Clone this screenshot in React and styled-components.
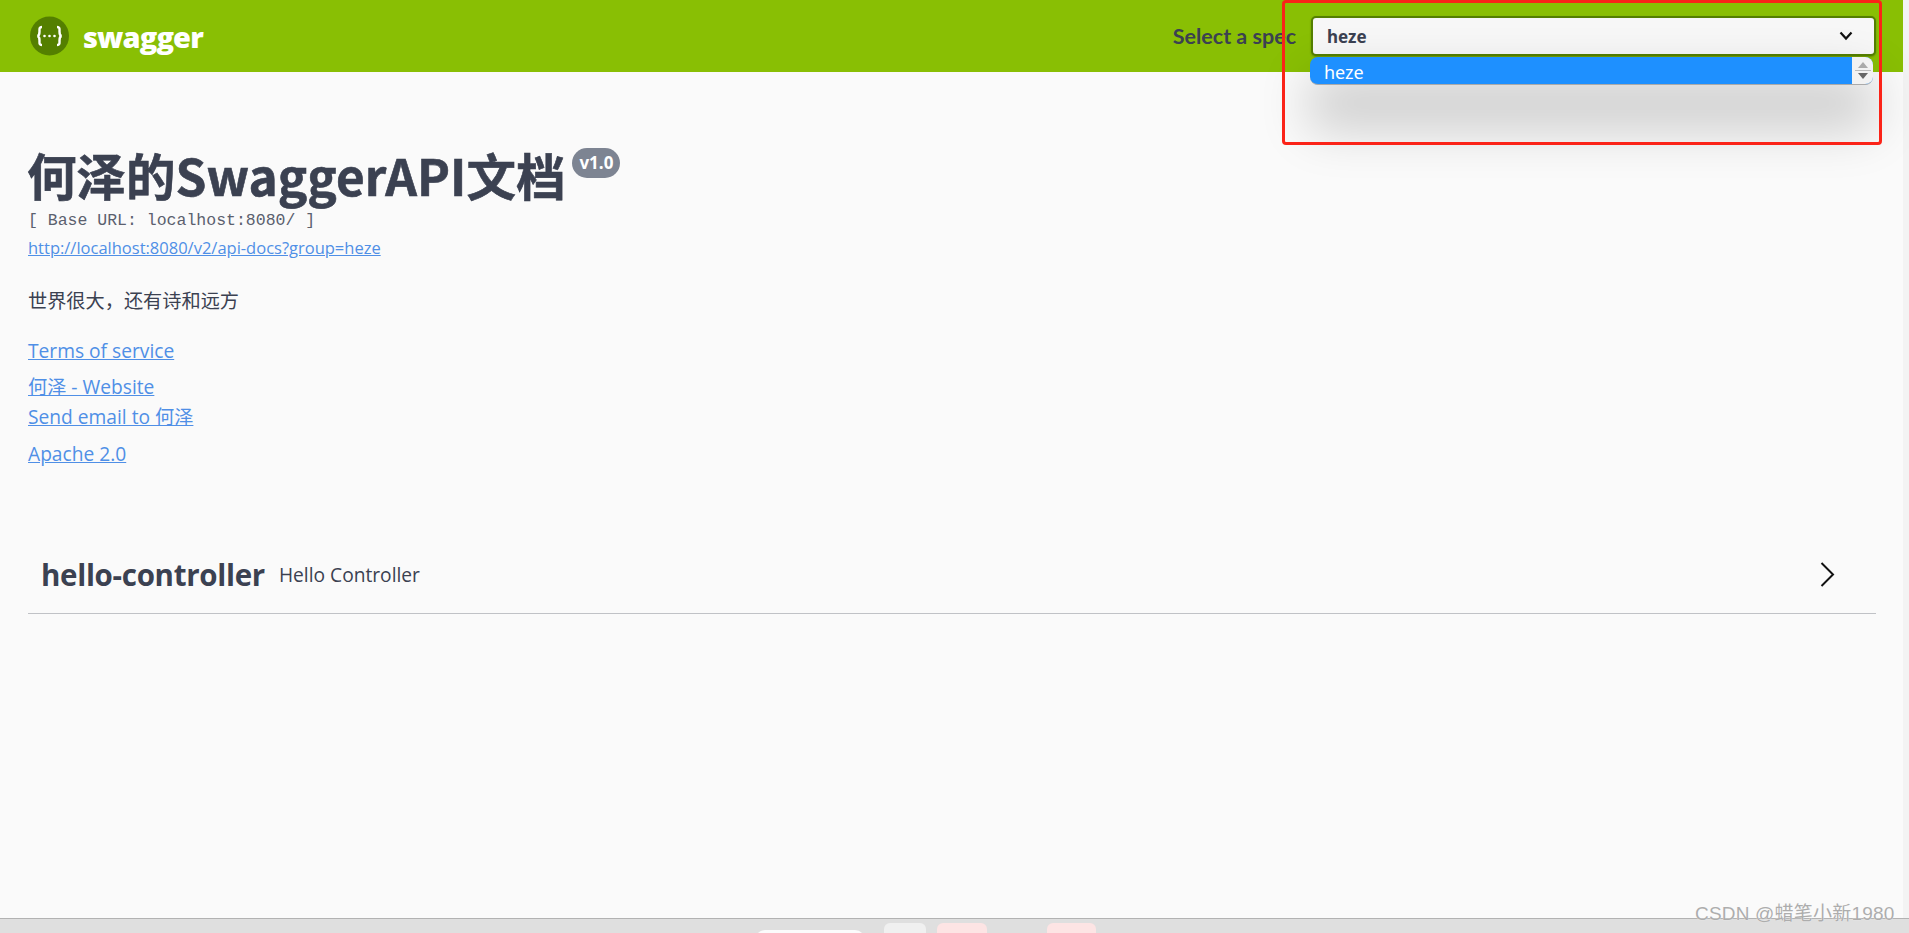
import React from "react";
import styled, { createGlobalStyle } from "styled-components";

const Global = createGlobalStyle`
  html, body { margin: 0; padding: 0; height: 100%; overflow: hidden; background: #fafafa; }
  * { box-sizing: border-box; }
`;
const CJK = `"Noto Sans CJK SC"`;
const Page = styled.div`
  position: relative; width: 1909px; height: 933px; overflow: hidden;
  display: flex; flex-direction: column;
  font-family: "Open Sans", ${CJK}, sans-serif; color: #3b4151;
`;
const Window = styled.div`flex: 1; min-height: 0; display: flex;`;
const Content = styled.div`flex: 1; min-width: 0; background: #fafafa;`;
const ScrollStrip = styled.div`width: 6px; background: #f3f3f3;`;
const TopBar = styled.header`
  height: 72px; background: #89bf04; display: flex; align-items: center; padding: 0 27px 0 30px;
`;
const Brand = styled.div`display: flex; align-items: center; gap: 14px; color: #fff;`;
const BrandName = styled.span`
  font: 800 29px/1 "Open Sans", sans-serif; letter-spacing: -0.9px;
`;
const SpecWrap = styled.div`margin-left: auto; display: flex; align-items: center; gap: 15px;`;
const SpecLabel = styled.span`
  font: 700 21.5px/1 Lato, sans-serif; color: #3b4151; white-space: nowrap; padding-top: 2px;
`;
const SpecSelect = styled.div`
  width: 565px; height: 40px; border: 2px solid #547f00; border-radius: 5px; background: #f7f7f7;
  box-shadow: 0 1px 2px rgba(0,0,0,.25); display: flex; align-items: center; justify-content: space-between;
  padding: 0 21px 0 14px; font: 700 17px/1 "Noto Sans", sans-serif;
`;
const Dropdown = styled.div`
  position: absolute; left: 1310px; top: 57px; width: 563px; height: 28px; border-radius: 8px;
  background: #1e90ff; color: #fff; display: flex; justify-content: space-between; overflow: hidden;
  font: 400 18px/30px "Noto Sans", sans-serif; padding-left: 14px;
  border-bottom: 1px solid #aaa;
`;
const DropShadow = styled.div`
  position: absolute; left: 1325px; top: 60px; width: 533px; height: 22px;
  box-shadow: 0 32px 50px 16px rgba(0,0,0,.18);
`;
const Scroller = styled.div`
  width: 21px; background: #f2f2f2; display: flex; flex-direction: column; align-items: center; justify-content: center; gap: 2px;
`;
const ArrowUp = styled.i`width: 0; height: 0; border: 5px solid transparent; border-top: 0; border-bottom: 6px solid #aaa;`;
const ArrowDown = styled.i`width: 0; height: 0; border: 5px solid transparent; border-bottom: 0; border-top: 6px solid #666;`;
const ArrowRule = styled.i`width: 16px; height: 1px; background: #bbb;`;
const Highlight = styled.div`
  position: absolute; left: 1282px; top: 0; width: 600px; height: 145px;
  border: 3.5px solid #fb2318; border-radius: 4px; pointer-events: none;
`;
const Main = styled.main`padding: 0 27px 0 28px;`;
const Info = styled.section`padding-top: 72px;`;
const TitleRow = styled.div`display: flex; align-items: flex-start;`;
const Title = styled.h2`
  margin: 0; font: 700 49.5px/62px ${CJK}, sans-serif; color: #3b4151; -webkit-text-stroke: 0.6px #3b4151;
  transform: translateX(-1px);
`;
const Version = styled.span`
  margin: 4px 0 0 6px; height: 30px; padding: 0 7px; border-radius: 15px; background: #7d8492; color: #fff;
  font: 700 17px/30px "Open Sans", sans-serif;
`;
const BaseUrl = styled.pre`
  margin: 5px 0 0; font: 400 16.5px/20px "Liberation Mono", monospace; color: #5b606e; height: 20px;
`;
const Link = styled.a`
  color: #4f8fe6; text-decoration: underline; cursor: pointer; display: block; width: fit-content;
  font: 400 ${p => p.$size || 19.2}px/${p => p.$line || 24}px "Open Sans", ${CJK}, sans-serif;
  margin-top: ${p => p.$top || 0}px;
`;
const Description = styled.p`margin: 29px 0 0; font: 400 19.2px/24px "Open Sans", ${CJK}, sans-serif;`;
const TagRow = styled.div`
  margin-top: 70px; height: 78px; padding: 0 41px 0 13px; border-bottom: 1px solid rgba(59,65,81,.3);
  display: flex; align-items: center; gap: 14px;
`;
const TagName = styled.h4`margin: 0; font: 700 29.5px/1 "Open Sans", sans-serif; letter-spacing: -0.3px;`;
const TagDesc = styled.small`font: 400 19.2px/1 "Open Sans", sans-serif; flex: 1;`;
const TaskBar = styled.footer`
  height: 15px; background: #dfdfdf; border-top: 1px solid #b2b2b2; display: flex; align-items: flex-start; overflow: hidden; flex-shrink: 0;
`;
const TaskText = styled.span`
  margin: ${p => p.$top}px 0 0 ${p => p.$gap}px; font: 400 13px/14px "Liberation Sans", sans-serif; color: #222;
`;
const TaskChip = styled.span`
  margin: ${p => p.$top}px 0 0 ${p => p.$gap}px; width: ${p => p.$w}px; height: 20px;
  border-radius: ${p => p.$r || 6}px; background: ${p => p.$bg};
`;
const Watermark = styled.div`
  position: absolute; left: 1695px; top: 902px; font: 400 19px/24px "Liberation Sans", ${CJK}, sans-serif;
  color: #adadad; letter-spacing: 0.2px; text-shadow: 0 0 1px #fff; white-space: nowrap;
`;

const Logo = () => (
  <svg width="39" height="40" viewBox="0 0 39 40">
    <circle cx="19.5" cy="20" r="19.5" fill="#547f00" />
    <path d="M12 11c-3 0-2.5 2-2.5 4.500S9.500 19.500 7.500 20c2 .5 2 2 2 4.500S9 29 12 29M27 11c3 0 2.500 2 2.500 4.500s0 4 2 4.500c-2 .5-2 2-2 4.500S30 29 27 29" fill="none" stroke="#fff" strokeWidth="2.400" />
    <circle cx="14.500" cy="20" r="1.300" fill="#fff" /><circle cx="19.500" cy="20" r="1.300" fill="#fff" /><circle cx="24.500" cy="20" r="1.300" fill="#fff" />
  </svg>
);
const SelectChevron = () => (
  <svg width="14" height="10" viewBox="0 0 14 10"><path d="M1.500 1.500 7 7.500l5.500-6" fill="none" stroke="#111" strokeWidth="2.200" /></svg>
);
const TagChevron = () => (
  <svg width="15" height="25" viewBox="0 0 15 25"><path d="M1.500 1 13 12.500 1.500 24" fill="none" stroke="#111" strokeWidth="2" /></svg>
);

export default function App() {
  return (
    <Page>
      <Global />
      <Window>
        <Content>
          <TopBar>
            <Brand><Logo /><BrandName>swagger</BrandName></Brand>
            <SpecWrap>
              <SpecLabel>Select a spec</SpecLabel>
              <SpecSelect>heze<SelectChevron /></SpecSelect>
            </SpecWrap>
          </TopBar>
          <Main>
            <Info>
              <TitleRow>
                <Title>何泽的SwaggerAPI文档</Title>
                <Version>v1.0</Version>
              </TitleRow>
              <BaseUrl>[ Base URL: localhost:8080/ ]</BaseUrl>
              <Link $size={16.5} $top={5}>http://localhost:8080/v2/api-docs?group=heze</Link>
              <Description>世界很大，还有诗和远方</Description>
              <Link $top={26}>Terms of service</Link>
              <Link $top={12}>何泽 - Website</Link>
              <Link $top={6}>Send email to 何泽</Link>
              <Link $top={13}>Apache 2.0</Link>
            </Info>
            <TagRow>
              <TagName>hello-controller</TagName>
              <TagDesc>Hello Controller</TagDesc>
              <TagChevron />
            </TagRow>
          </Main>
        </Content>
        <ScrollStrip />
      </Window>
      <TaskBar>
        <TaskText $top={12} $gap={56}>1013</TaskText>
        <TaskChip $top={11} $gap={670} $w={110} $r={10} $bg="#fbfbfb" />
        <TaskChip $top={4} $gap={19} $w={42} $bg="#f0f0f0" />
        <TaskChip $top={4} $gap={11} $w={50} $bg="#fde4e4" />
        <TaskChip $top={4} $gap={60} $w={49} $bg="#fde4e4" />
        <TaskText $top={12} $gap={662}>17:00</TaskText>
      </TaskBar>
      <DropShadow />
      <Dropdown>heze<Scroller><ArrowUp /><ArrowRule /><ArrowDown /></Scroller></Dropdown>
      <Highlight />
      <Watermark>CSDN @蜡笔小新1980</Watermark>
    </Page>
  );
}
